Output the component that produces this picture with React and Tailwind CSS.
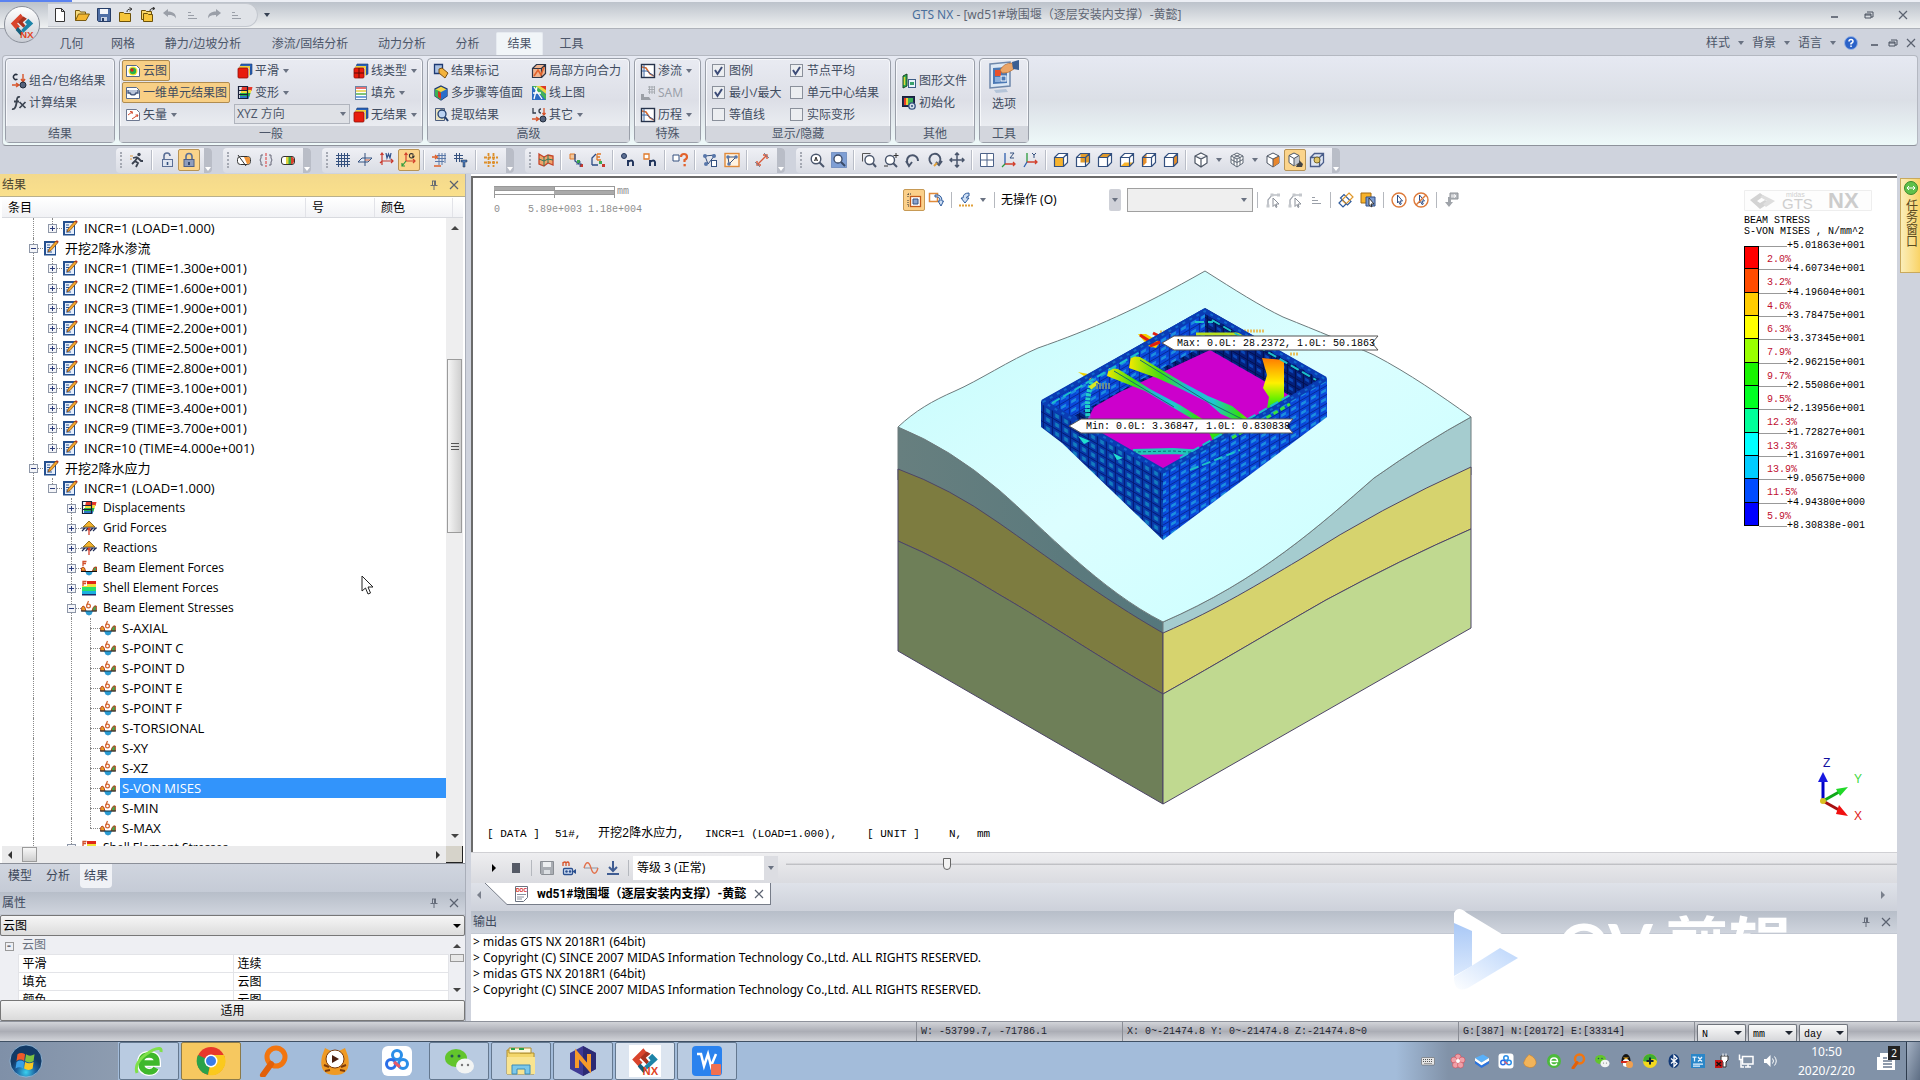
import React from "react";

const UI = "font-['Noto_Sans','Noto_Sans_CJK_SC',sans-serif]";
const MONO = "font-['Liberation_Mono','Noto_Sans_CJK_SC',monospace]";

/* ---------- icons ---------- */
const cubeEdges = "M1.500 5.500h9v9h-9zM1.500 5.500l4-4h9v9l-4 4M10.500 5.500l4-4";
const box = (face, d) => (
  <>
    <path d="M1.500 5.500l4-4h9v9l-4 4h-9z" fill="#fff" />
    <path d={d} fill={face} />
    <path d={cubeEdges} fill="none" stroke="#33507f" strokeWidth="1.200" />
  </>
);
const redCube = (
  <>
    <path d="M4 1h11v10l-2 1V4H3z" fill="#2a62b8" stroke="#173a72" strokeWidth=".6" />
    <path d="M3 3h10v9l-1 1V5H2z" fill="#f0d040" />
    <rect x="1" y="5" width="10" height="10" rx="1" fill="#e81c0c" stroke="#901008" strokeWidth=".8" />
  </>
);
const hex = "M8 1l6 3v7l-6 4-6-4V4z";

const ICONS = {
  new: <path d="M3.500 1.500h6l3 3v10h-9zM9.500 1.500v3h3" fill="#fff" stroke="#333" />,
  open: <><path d="M1.500 13.500v-10h4l1 1.500h5v2" fill="#f7dc80" stroke="#7a5b10" /><path d="M1.500 13.500l3-6.500h11l-3.500 6.500z" fill="#f4b731" stroke="#7a5b10" /></>,
  save: <><path d="M1.500 1.500h13v13h-12l-1-1z" fill="#4f6fa5" stroke="#263d66" /><path d="M4 2h8v5H4z" fill="#f4f6fa" /><path d="M5 10h6v4H5z" fill="#c9d2e3" /><path d="M6 11h2v3H6z" fill="#263d66" /></>,
  saveG: <><path d="M1.500 1.500h13v13h-12l-1-1z" fill="#a9adb3" stroke="#8a8e94" /><path d="M4 2h8v5H4z" fill="#eceef0" /><path d="M5 10h6v4H5z" fill="#dcdfe3" /></>,
  folderUp: <><path d="M1.500 5.500h4l1 1h6v8h-11z" fill="#f6c63c" stroke="#6e5208" /><path d="M9 5c0-2 1-3 4-3M11.500 .5L14 2l-2.500 2" fill="none" stroke="#333" /></>,
  folders: <><path d="M1.500 3.500h4l1 1h5v8h-10z" fill="#f9d869" stroke="#6e5208" /><path d="M3.500 6.500h4l1 1h4v7h-9z" fill="#f6c63c" stroke="#6e5208" /><path d="M10 4c0-2 1-2.500 4-2.500M12.500 0L15 1.500 12.500 3" fill="none" stroke="#333" /></>,
  undo: <path d="M1 6l5-4v2.500c5 0 8 2 8 7-1.500-3-4-3.500-8-3.500V10z" fill="#9a9fa8" />,
  redo: <path d="M15 6l-5-4v2.500c-5 0-8 2-8 7 1.500-3 4-3.500 8-3.500V10z" fill="#9a9fa8" />,
  list: <path d="M4 5.500h3M4 8.500h6M4 11.500h9" stroke="#9a9fa8" />,
  combine: <><path d="M6.500 2A2.500 2.500 0 1 0 6.500 6" fill="none" stroke="#27303f" strokeWidth="1.500" /><path d="M12 1v7M10 6l2 3 2-3" stroke="#d8542a" strokeWidth="1.400" fill="none" /><path d="M1 12h6M5 10l3 2-3 2" stroke="#d8542a" strokeWidth="1.400" fill="none" /><circle cx="12" cy="12" r="3" fill="#55637c" stroke="#222c3c" /></>,
  fx: <><path d="M9 2C5.500 1 6 5 5.500 8S4 15 1 14M3 6.500h5" fill="none" stroke="#3b4350" strokeWidth="1.800" /><path d="M8.500 7l6 6M14.500 7l-6 6" stroke="#3b4350" strokeWidth="1.700" /></>,
  contour: <><path d="M1.500 2.500h10l3 3v8h-13z" fill="#fff" stroke="#56698c" /><circle cx="8" cy="8" r="4.500" fill="#f3e330" /><circle cx="8" cy="8" r="3.200" fill="#27b24a" /><circle cx="7" cy="7" r="1.700" fill="#d8221c" /></>,
  oned: <><path d="M1.500 2.500h10l3 3v8h-13z" fill="#fff" stroke="#56698c" /><path d="M3 5v3h2c.5 2.500 5.500 2.500 6 0h2V5" fill="#b8c4da" stroke="#45587c" strokeWidth="1.300" /></>,
  vector: <><path d="M1.500 2.500h10l3 3v8h-13z" fill="#fff" stroke="#6d7890" /><path d="M3 8l4-3M5 4.500l2.500.3L7 7M7 12l6-4M10.500 8l2.500 0-1 2" fill="none" stroke="#d44a2c" /></>,
  redCube,
  lineType: <>{redCube}<path d="M6 5v10M1 10h10" stroke="#5a0b06" /></>,
  deform: <><path d="M5 2h10.500l-1 4H4z" fill="#e5382a" /><path d="M4 5h10.500l-1 3.500H4z" fill="#f2dc3a" /><path d="M3 8h10.500l-1 3.500H3z" fill="#22b24c" /><path d="M3 11h9.500l-1 3H3z" fill="#2a7ac8" /><path d="M1.500 1.500h9v12h-9zM1 5.500h10M1 9.500h10" fill="none" stroke="#18203a" strokeWidth="1.200" /></>,
  fill: <><rect x="2.500" y="1.500" width="11" height="13" fill="#fff" stroke="#6b87a8" /><path d="M3 3h10" stroke="#e04040" strokeWidth="1.500" /><path d="M3 6h10" stroke="#e8cc40" strokeWidth="1.500" /><path d="M3 9h10" stroke="#56b04a" strokeWidth="1.500" /><path d="M3 12h10" stroke="#4a88d4" strokeWidth="1.500" /></>,
  tag: <><path d="M1.500 1.500h8v9h-8z" fill="#a9c1e2" stroke="#1d3a73" strokeWidth="1.300" /><path d="M6 6l3-1 6 5-3 5-6-5z" fill="#f3b33c" stroke="#7c4f10" /></>,
  iso: <><path d={hex} fill="#f1d544" stroke="#1d3a73" strokeWidth="1.300" /><path d="M8 7l6-3v7l-6 4z" fill="#2a6ec9" /><path d="M2 4l6 3v8l-6-4z" fill="#3cb054" /><path d="M5 6l3 2v6l-3-2z" fill="#d3321f" /></>,
  extract: <><path d="M2.500 1.500h9v12h-9z" fill="#e9e2c0" stroke="#4c5d7e" /><circle cx="9" cy="7" r="4" fill="#bcd3f2" stroke="#24406e" strokeWidth="1.300" /><path d="M12 10l3 4" stroke="#24406e" strokeWidth="2" /></>,
  local: <><path d={cubeEdges} fill="#f0b490" stroke="#2b3447" strokeWidth="1.200" /><path d="M3 13l4-6 3 5 3-8" fill="none" stroke="#e2622c" strokeWidth="1.600" /></>,
  online: <><path d="M1 1h14v14H1z" fill="#2c6cc2" /><path d="M1 1h5l9 9v5z" fill="#43b356" /><path d="M5 1h10v8z" fill="#e9d83f" /><path d="M9 1h6v4z" fill="#dd3a27" /><path d="M3 2l8 12M6 2l-3 12M2 8h8" stroke="#fff" strokeWidth="1.300" /></>,
  lc: <><path d="M2 1v5h3M10 2a2 2 0 1 0 0 4" fill="none" stroke="#333b49" strokeWidth="1.300" /><path d="M13 1v7M11.500 6l1.500 2 1.500-2M1 12h6M5 10l3 2-3 2" stroke="#d8542a" strokeWidth="1.300" fill="none" /><circle cx="12" cy="12" r="3" fill="#55637c" stroke="#222c3c" /></>,
  seep: <><rect x="1.500" y="1.500" width="13" height="13" fill="#fff" stroke="#26324a" strokeWidth="1.400" /><path d="M2 4l4 1 4 6 4 2" fill="none" stroke="#d86a2c" strokeWidth="1.500" /><path d="M2 8l5 0 7 5M4 2v12" fill="none" stroke="#3a64a0" /></>,
  sam: <><path d="M1 9h3v3h5l2 3H1z" fill="#9b9fa6" /><path d="M8 2h7M8 4.500h7M8 7h7M9.500 1v8M12 1v8M14.500 1v8" stroke="#a4a8ae" strokeWidth=".9" /></>,
  gfile: <><path d="M2 3l4-2v12l-4 2z" fill="#2fae4e" stroke="#174424" /><path d="M3.500 4v8" stroke="#e3d53a" strokeWidth="1.500" /><rect x="7.500" y="6.500" width="7" height="8" fill="#e9f3fb" stroke="#3c5d86" /><path d="M9 9h4v3H9z" fill="#39a06d" /></>,
  init: <><rect x="1.500" y="1.500" width="12" height="10" fill="#1e2c54" stroke="#18203c" /><path d="M3 3h4v7H3z" fill="#e63b28" /><path d="M5 3h4v7H5z" fill="#ecd23a" /><path d="M7 3h5v7H7z" fill="#3db158" /><circle cx="11" cy="11" r="3.200" fill="#d5dfec" stroke="#33507f" strokeWidth="1.300" /><circle cx="11" cy="11" r="1" fill="#33507f" /></>,
  run: <><circle cx="10" cy="2.500" r="1.700" fill="#3b4250" /><path d="M9 5l-3 4 3 2-2 4M6 9l-3 3M8 5l-4 1M9 6l3 3h2" fill="none" stroke="#3b4250" strokeWidth="1.800" /><path d="M1 4h3M1 7h2" stroke="#e09a3a" /></>,
  unlock: <><path d="M5 8V4a3 3 0 0 1 6 0" fill="none" stroke="#5b6f96" strokeWidth="1.600" /><rect x="3.500" y="7.500" width="10" height="7" fill="#dfe5f0" stroke="#5b6f96" /><path d="M8.500 10v3" stroke="#33507f" strokeWidth="1.600" /></>,
  lock: <><path d="M5 8V4.500a3 3 0 0 1 6 0V8" fill="none" stroke="#5b6f96" strokeWidth="1.600" /><rect x="3" y="7.500" width="10" height="7" fill="#8f9dbd" stroke="#4e5f86" /><path d="M8 10v3" stroke="#24365c" strokeWidth="1.600" /></>,
  pipe1: <><rect x="1.500" y="4.500" width="13" height="8" rx="3" fill="#fff" stroke="#333" /><path d="M8 5h4a2 2 0 0 1 2 2v3a2 2 0 0 1-2 2h-1z" fill="#f0953a" /><path d="M2 3l8 11" stroke="#333" /></>,
  pipe2: <><path d="M5 3H3v3l-1 2 1 2v3h2M11 3h2v3l1 2-1 2v3h-2" fill="#dfe4ec" stroke="#667" /><path d="M8 1v14" stroke="#d33" strokeDasharray="3 1" /></>,
  pipe3: <><rect x="1.500" y="4.500" width="13" height="8" rx="2.500" fill="#fff" stroke="#333" /><path d="M6 5h3v7H6z" fill="#e2d23a" /><path d="M8.500 5h3v7h-3z" fill="#3ba84c" /><path d="M11 5h1.500l1.500 2v3l-1.500 2H11z" fill="#d6402c" /></>,
  grid: <path d="M3.500 1v14M6.500 1v14M9.500 1v14M12.500 1v14M1 3.500h14M1 6.500h14M1 9.500h14M1 12.500h14" stroke="#34507e" />,
  plane: <><path d="M1 10l4-4h10l-4 4z" fill="#e3ecf8" stroke="#34507e" /><path d="M8 1v13" stroke="#34507e" /><path d="M8 8h5" stroke="#d85a2a" /></>,
  axW: <><path d="M3 1v12M1 11l2-2h11M12 7l2 2-2 2M1.500 3L3 1l1.500 2" stroke="#c8382c" strokeWidth="1.200" fill="none" /><path d="M7 1l1 5 1.500-4L11 6l1-5" fill="none" stroke="#2e4f8a" strokeWidth="1.200" /></>,
  axG: <><path d="M5 1v8h9M3.500 3L5 1l1.500 2M12 7l2 2-2 2" stroke="#d2402c" strokeWidth="1.200" fill="none" /><path d="M5 9l-4 5M1 11v3h3" stroke="#2b9a3c" strokeWidth="1.200" fill="none" /><path d="M12.500 2.500C10 .5 8 2 8.500 4.500S13 6 13 4.200h-2" fill="none" stroke="#333" strokeWidth="1.200" /></>,
  gridArrow: <><path d="M6 3.500h9M6 6.500h9M4 9.500h9M8 1v12M11 1v12M14 1v10" stroke="#5b78a8" /><path d="M1 5h5M4 3l2.500 2L4 7M3 14h7" stroke="#e0602a" strokeWidth="1.300" fill="none" /></>,
  gridHammer: <><path d="M1 3.500h9M1 6.500h9M3.500 1v9M6.500 1v9" stroke="#34507e" /><path d="M8 8h6v2h-2v5h-2v-5H8z" fill="#4978b8" stroke="#234" strokeWidth=".5" /></>,
  orangeGrid: <path d="M5.500 1v14M10.500 1v14M1 5.500h14M1 10.500h14" stroke="#dd8f2a" strokeWidth="1.800" strokeDasharray="3 1" />,
  map: <><path d="M1 2l5 3 4-2 5 1v9l-5-2-4 3-5-2z" fill="#f0a46a" stroke="#c4452a" strokeWidth="1.300" /><path d="M6 5v9M10 3v8M1 7l5 2 4-2 5 1" stroke="#317a5a" fill="none" /></>,
  n1: <><path d="M2 2h5v5H2z" fill="#f3c69a" stroke="#e07a2a" /><path d="M7 2v7l4 3" stroke="#2d4d86" strokeWidth="1.300" fill="none" /><path d="M9 8h3v3H9z" fill="#3caa52" /><path d="M12 12h3v3h-3z" fill="#c8382c" /><path d="M12 9v6M8 12h6" stroke="#2d4d86" strokeWidth=".8" /></>,
  n2: <><path d="M2 13V6l4-4M2 13h6" stroke="#2d4d86" strokeWidth="1.300" fill="none" /><path d="M7 2h4M7 5h3M7 8h4M7 2v6" stroke="#e07a2a" strokeWidth="1.300" /><path d="M9 9h3v3H9z" fill="#3caa52" /><path d="M12 12h3v3h-3z" fill="#c8382c" /></>,
  nn: <><circle cx="4" cy="4" r="2.500" fill="#5c6f93" stroke="#26385c" /><path d="M8 14V8M8 10q4-3 5 0v4" fill="none" stroke="#1c3058" strokeWidth="1.900" /></>,
  nn2: <><path d="M2 2h5v5H2z" fill="#fff" stroke="#e07a2a" strokeWidth="1.300" /><path d="M8 14V8M8 10q4-3 5 0v4" fill="none" stroke="#1c3058" strokeWidth="1.900" /></>,
  qm: <><path d="M1 3h6v6H1z" fill="#fff" stroke="#34507e" /><path d="M9 5q0-3 3-3t3 3q0 2-2.500 3v2" fill="none" stroke="#e2622c" strokeWidth="2.200" /><rect x="11.500" y="12" width="2.300" height="2.300" fill="#e2622c" /></>,
  mol: <><path d="M3 4l10-1M3 4l3 8M13 3l-7 9" stroke="#34507e" fill="none" /><circle cx="3" cy="4" r="2" fill="#5877aa" /><circle cx="12" cy="4" r="2" fill="#5877aa" /><circle cx="4" cy="12" r="2" fill="#5877aa" /><rect x="9.500" y="8.500" width="5" height="6" fill="#fff" stroke="#34507e" /></>,
  mol2: <><rect x="1" y="1.500" width="14" height="13" fill="#fff3e2" stroke="#e08a3a" strokeWidth="1.400" /><path d="M4 5h8l-7 7z" stroke="#34507e" fill="none" /><circle cx="4" cy="5" r="1.800" fill="#5877aa" /><circle cx="12" cy="5" r="1.800" fill="#5877aa" /><circle cx="5" cy="12" r="1.800" fill="#5877aa" /></>,
  measure: <><path d="M3 13L13 3M9 3h4v4M7 13H3V9" stroke="#d85a3a" strokeWidth="1.400" fill="none" /><path d="M1 10l5 5M10 1l5 5" stroke="#7a8499" /></>,
  zoomA: <><circle cx="7" cy="7" r="4.800" fill="#fff" stroke="#4a566c" strokeWidth="1.400" /><path d="M10.500 10.500L15 15" stroke="#4a566c" strokeWidth="2" /><path d="M5.500 9L7 5l1.500 4M6 8h2" stroke="#333" fill="none" /></>,
  zoomSel: <><rect x=".5" y=".5" width="15" height="15" fill="#7f9fd4" stroke="#4066a8" strokeDasharray="1 1" /><circle cx="7" cy="7" r="4" fill="#fff" stroke="#3a4a68" strokeWidth="1.300" /><path d="M10 10l4 4" stroke="#3a4a68" strokeWidth="2" /></>,
  zoomR: <><path d="M1.500 1.500h8M1.500 1.500v8" stroke="#555" /><circle cx="8.500" cy="8" r="4.500" fill="#fff" stroke="#4a566c" strokeWidth="1.400" /><path d="M12 11.500l3 3.500" stroke="#4a566c" strokeWidth="2" /></>,
  zoomP: <><circle cx="7" cy="8" r="4.500" fill="#fff" stroke="#4a566c" strokeWidth="1.400" /><path d="M10 11l4 4" stroke="#4a566c" strokeWidth="2" /><path d="M13 1v5M10.500 3.500h5M1 14h4" stroke="#333" /></>,
  rotL: <path d="M4 13A5.500 5.500 0 1 1 13 9M1 9l3 5 3-4" fill="none" stroke="#4a566c" strokeWidth="1.900" />,
  rotR: <><path d="M5 12A5.500 5.500 0 1 1 12 11M15 9l-3 4-3-3" fill="none" stroke="#4a566c" strokeWidth="1.900" /><path d="M7 14l3-3" stroke="#e0a03a" strokeWidth="2" /></>,
  pan: <path d="M8 1v14M1 8h14M6 3l2-2 2 2M6 13l2 2 2-2M3 6L1 8l2 2M13 6l2 2-2 2" fill="none" stroke="#4a566c" strokeWidth="1.500" />,
  win4: <path d="M1.500 1.500h13v13h-13zM8 1.500v13M1.500 8h13" fill="#fff" stroke="#4c6288" />,
  axZ: <><path d="M4 1v11" stroke="#2f5fae" strokeWidth="1.300" /><path d="M4 12h10M12 10l2 2-2 2" stroke="#d2402c" strokeWidth="1.300" fill="none" /><path d="M4 12l-3 3" stroke="#2b9a3c" strokeWidth="1.300" /><path d="M9 1h4L9 6h4" fill="none" stroke="#34507e" /></>,
  axY: <><path d="M4 1v9" stroke="#2b9a3c" strokeWidth="1.300" /><path d="M4 10h10M12 8l2 2-2 2" stroke="#d2402c" strokeWidth="1.300" fill="none" /><path d="M4 10l-3 5" stroke="#2f5fae" strokeWidth="1.300" /><path d="M9 1l2 2 2-2M11 3v3" fill="none" stroke="#34507e" /></>,
  bFront: box("#f7b32c", "M1.500 5.500h9v9h-9z"),
  bBack: box("#e09a2a", "M5.500 1.500h9v9h-9z"),
  bTop: box("#e09a2a", "M1.500 5.500l4-4h9l-4 4z"),
  bBottom: box("#f7b32c", "M1.500 14.500l4-4h9l-4 4z"),
  bLeft: box("#e88f2a", "M1.500 5.500l4-4v9l-4 4z"),
  bRight: box("#e88f2a", "M10.500 5.500l4-4v9l-4 4z"),
  cube: <path d={hex + "M2 4l6 3 6-3M8 7v8"} fill="#fff" stroke="#4c5563" strokeWidth="1.200" />,
  cubeG: <path d={hex + "M2 4l6 3 6-3M8 7v8M5 2.500l6 3v7.500M11 2.500l-6 3V13M2 7.500l6 3 6-3"} fill="#fff" stroke="#5f6875" />,
  cubeO: <><path d={hex} fill="#fff" stroke="#4c5563" /><path d="M8 7l6-3v7l-6 4z" fill="#e8862c" /><path d="M2 4l6 3 6-3M8 7v8" fill="none" stroke="#4c5563" /></>,
  cubeS: <><path d="M9 15h6l1-3-4-4z" fill="#444" /><path d="M7 1l5 2.500v7L7 14l-5-3.500v-7z" fill="#fff" stroke="#4c5563" /><path d="M7 6.500l5-3v7L7 14z" fill="#c3c8d0" /><path d="M2 3.500l5 3 5-3M7 6.500V14" fill="none" stroke="#4c5563" /></>,
  cubeI: <><path d={cubeEdges} fill="#dfe6f2" stroke="#4a5d8a" strokeWidth="1.300" /><circle cx="8" cy="8" r="3" fill="#e2c66a" stroke="#7c6a2a" /></>,
  doc: <><rect x="1" y="1" width="12" height="14.500" fill="#24508f" /><path d="M3 3h9v11H3z" fill="#e6eefa" /><path d="M4 5h3M4 7.500h3M4 10h4M4 12h5" stroke="#2f5a9c" /><path d="M5 12l1-3 7-8 2 1.500-7 8z" fill="#f5a62a" stroke="#7a4310" strokeWidth=".7" /><path d="M12.500 1.500l2 1.500 1.200-1.600L14 .2z" fill="#b3361e" /></>,
  reaction: <><path d="M8 1l6 6H2z" fill="#f2b32c" stroke="#7a5810" strokeWidth=".8" /><path d="M0 8h16M1 11l3-3M4.500 11l3-3M9 11l3-3M12 11l3-3" stroke="#1e2a55" strokeWidth="1.200" /><path d="M8 15V8M6.500 10L8 8l1.500 2" fill="none" stroke="#d2402c" strokeWidth="1.300" /></>,
  beamF: <><path d="M.5 11V8q1.500-2 3 0l1 3z" fill="#eaa02c" stroke="#b8401c" /><path d="M15.500 11V7q-3-1-4 4z" fill="#4aa24e" stroke="#b8401c" /><path d="M4 11h8l-1.500 3.500L8 15.500l-2.500-1z" fill="#2a9ad0" /><path d="M0 11.500h16" stroke="#111" /><path d="M2 6V1.500h3.500M2 3.500h3" fill="none" stroke="#d2502c" strokeWidth="1.300" /></>,
  beamS: <><path d="M.7 11V7.500q1.300-2.500 3-.5L5 11z" fill="#eaa02c" stroke="#b8401c" /><path d="M15.300 11V6q-3-1-4.300 5z" fill="#4aa24e" stroke="#b8401c" /><path d="M4 11h8l-1.500 3.500L8 15.500l-2.500-1z" fill="#2a9ad0" /><path d="M0 11h16" stroke="#14303a" /><circle cx="7.500" cy="6" r="1.900" fill="#fff" stroke="#d2602c" strokeWidth="1.200" /><path d="M5.800 5L7.500 1" stroke="#d2602c" strokeWidth="1.200" /></>,
  shellF: <><path d="M1 1h14v4H1z" fill="#e02818" /><path d="M1 4h14v3H1z" fill="#f2e23a" /><path d="M1 7h14v4H1z" fill="#2ae06a" /><path d="M1 11h14v4H1z" fill="#1ab0e0" /><path d="M1 14h14v1.500H1z" fill="#1a2a6a" /><path d="M0 0h6v6H0z" fill="#fff" /><path d="M2 6V1.500h3.500M2 3.500h3" fill="none" stroke="#d2502c" strokeWidth="1.300" /></>,
  camera: <><path d="M2 6V2M2 3q2-2 3 0v3M5 3q2-2 3 0v3" fill="none" stroke="#d8542a" strokeWidth="1.300" /><rect x="2.500" y="8.500" width="9" height="6" rx="1" fill="#d3e2f7" stroke="#2a4f8e" strokeWidth="1.300" /><path d="M12 11l3-2v5l-3-2z" fill="#2a4f8e" /><circle cx="5.500" cy="11.500" r="1.300" fill="#2a4f8e" /><circle cx="9" cy="11.500" r="1.300" fill="#2a4f8e" /></>,
  wave: <><path d="M1 8h14" stroke="#8b93a2" /><path d="M1 8c2-7 5-7 7 0s5 7 7 0" fill="none" stroke="#e2704a" strokeWidth="1.300" /></>,
  down: <path d="M8 1v9M4 7l4 4 4-4M2 14h12" fill="none" stroke="#3f5c92" strokeWidth="2" />,
  selBox: <><path d="M2 2h3M2 2v3M2 8v6h4" stroke="#333" strokeDasharray="1 1" /><rect x="4.500" y="4.500" width="10" height="10" fill="#fff" stroke="#c25a1a" strokeWidth="1.300" /><path d="M7 7h5v5H7z" fill="#8aa4d0" stroke="#34507e" /></>,
  selNext: <><rect x="1.500" y="1.500" width="8" height="8" fill="#fff" stroke="#e08a3a" strokeWidth="1.500" /><path d="M7 5q5-1 5 4h-2l3 5 2.500-5h-1.500q0-7-7-6z" fill="#cfe0f5" stroke="#2d5a9c" /></>,
  snap: <><path d="M11 1q-6 0-6 5H3l4 5 4-5H8.500q0-2 2.500-2z" fill="#cfe0f5" stroke="#2d5a9c" /><path d="M1 13.500h14" stroke="#e0a03a" strokeWidth="2" strokeDasharray="2 1" /></>,
  pick: <><path d="M3 14V8l4-5h7" fill="none" stroke="#9a9fa8" strokeWidth="1.200" /><path d="M1.500 12.500h3v3h-3zM5.500 1.500h3v3h-3zM12 1.500h3v3h-3z" fill="#c4c7cc" /><path d="M8 6l6 6h-3l1 3-1 .5-1-3-2 2z" fill="#fff" stroke="#8a8f98" /></>,
  diamonds: <><path d="M1 4.500l3.500-3.500 7 7-3.500 3.500z" transform="translate(1.500 1.500)" fill="#fff" stroke="#2d5a9c" strokeWidth="1.200" /><path d="M11 1l4 4-7 7-4-4z" fill="none" stroke="#e0982a" strokeWidth="1.200" /><path d="M4.500 7.500L1 11l4 4 3.500-3.500" fill="none" stroke="#2d5a9c" strokeWidth="1.200" /></>,
  boxPick: <><path d="M1 1h10v10H1z" fill="#f7b32c" stroke="#a46a10" /><path d="M6 5h9v9H6z" fill="#7d9cd0" stroke="#2d4d86" /><path d="M9 6l5 6h-3l1 3-3-2z" fill="#fff" stroke="#333" /></>,
  pickC: <><circle cx="8" cy="8" r="7" fill="#fff" stroke="#dd7a3a" strokeWidth="1.400" /><path d="M6.500 3l5 6H9l1.300 3-1.300.5L7.700 9.500 6.500 11z" fill="#fff" stroke="#2d4d86" /></>,
  pickX: <><circle cx="8" cy="8" r="7" fill="#fff" stroke="#dd7a3a" strokeWidth="1.400" /><path d="M6.500 3l5 6H9l1.300 3-1.300.5L7.700 9.500 6.500 11z" fill="#fff" stroke="#2d4d86" /><path d="M3 13L13 3" stroke="#dd7a3a" strokeWidth="1.400" /></>,
  idArrow: <><path d="M7 1h8v6H7z" fill="#b4b7bc" stroke="#8f9398" /><path d="M9 2.500v3M11 2.500v3l2-1.500z" stroke="#fff" fill="none" /><path d="M5 5h3v5h2l-4 5-4-5h3z" fill="#9fa3a9" /></>,
};

const Icon = ({ n, className = "h-4 w-4" }) => (
  <svg viewBox="0 0 16 16" className={"shrink-0 " + className} fill="none" aria-hidden="true">{ICONS[n]}</svg>
);
const Caret = ({ className = "text-gray-500" }) => (
  <svg viewBox="0 0 6 4" className={"h-1 w-1.5 shrink-0 " + className} aria-hidden="true"><path d="M0 0h6L3 4z" fill="currentColor" /></svg>
);
const Pin = () => <svg viewBox="0 0 10 10" className="h-2.5 w-2.5" aria-hidden="true"><path d="M3 1h4M3.500 1v4M6.500 1v4M5.500 1v4M1.500 5.500h7M5 6v4" fill="none" stroke="#5b6270" strokeWidth=".9" /></svg>;
const Cross = () => <svg viewBox="0 0 10 10" className="h-2.5 w-2.5" aria-hidden="true"><path d="M1 1l8 8M9 1L1 9" stroke="#5b6270" strokeWidth="1.200" /></svg>;
const Min = () => <svg viewBox="0 0 10 10" className="h-2.5 w-2.5" aria-hidden="true"><path d="M1 7h7" stroke="#4b5260" strokeWidth="1.500" /></svg>;
const Restore = () => <svg viewBox="0 0 10 10" className="h-2.5 w-2.5" aria-hidden="true"><path d="M3 2h6v5H7M1 4h6v4H1zM1 5h6" fill="none" stroke="#4b5260" /></svg>;

const NxMark = ({ className }) => (
  <svg viewBox="0 0 40 40" className={className} aria-hidden="true">
    <path d="M18 4L4 18l8 9 5-5-4-4 9-9z" fill="#d9442c" />
    <path d="M22 8l-8 8 8 8 3-3-4-5 6-5z" fill="#a8321f" />
    <path d="M36 18l-7-7-5 5 3 3-8 8 3 4z" fill="#1d84a8" />
    <path d="M22 31l-8-8-3 4 7 8z" fill="#16607e" />
    <text x="17" y="38" fontSize="14" fontWeight="700" fill="#e2451f" fontFamily="Liberation Sans">NX</text>
  </svg>
);

/* ---------- ribbon ---------- */
const Group = ({ title, w, children }) => (
  <section className={"flex flex-col rounded-sm border border-[#9a9fa9] bg-linear-to-b from-[#e9ebf2] via-[#dddfe7] to-[#f2f5f7] shadow-[inset_0_0_0_1px_#f7f8fb] " + w}>
    <div className="flex flex-1 px-0.5 pt-px">{children}</div>
    <h2 className="h-4 bg-[#d3d6dd] text-center text-xs leading-4 text-[#4c5669]">{title}</h2>
  </section>
);
const RBtn = ({ icon, children, drop, on, dim }) => (
  <button className={"flex h-[21px] items-center gap-0.5 self-start rounded-xs border px-0.5 text-xs whitespace-nowrap " + (on ? "border-[#b08c50] bg-[#f8cf85] " : "border-transparent ") + (dim ? "text-[#9ba0a9]" : "text-[#414c60]")}>
    <Icon n={icon} />
    <span>{children}</span>
    {drop && <span className="pl-0.5"><Caret /></span>}
  </button>
);
const Col = ({ w = "", children, mid }) => <div className={"flex flex-col gap-px " + (mid ? "pt-2.5 " : "") + w}>{children}</div>;
const Check = ({ label, on }) => (
  <label className="flex h-[21px] items-center gap-1 text-xs whitespace-nowrap text-[#414c60]">
    <span className="grid">
      <input type="checkbox" defaultChecked={on} className="peer col-start-1 row-start-1 h-[13px] w-[13px] appearance-none border border-[#8a909b] bg-[#eceef1]" />
      <svg viewBox="0 0 13 13" className="pointer-events-none invisible col-start-1 row-start-1 h-[13px] w-[13px] peer-checked:visible" aria-hidden="true"><path d="M3 6l2.500 4L10 3" fill="none" stroke="#3d4c78" strokeWidth="2" /></svg>
    </span>
    {label}
  </label>
);

function Ribbon() {
  return (
    <div className="mx-0.5 flex h-[91px] gap-1 rounded border border-[#b4b8c1] border-b-[#8e929b] bg-linear-to-b from-[#e6e9f2] via-[#dbdfe6] to-[#eef9f9] px-0.5 pt-0.5 pb-0.5">
      <Group title="结果" w="w-[110px]"><Col mid><RBtn icon="combine">组合/包络结果</RBtn><RBtn icon="fx">计算结果</RBtn></Col></Group>
      <Group title="一般" w="w-[304px]">
        <Col w="w-[112px]"><RBtn icon="contour" on>云图</RBtn><RBtn icon="oned" on>一维单元结果图</RBtn><RBtn icon="vector" drop>矢量</RBtn></Col>
        <Col w="w-[116px]">
          <RBtn icon="redCube" drop>平滑</RBtn><RBtn icon="deform" drop>变形</RBtn>
          <label className="grid items-center text-[#4c5669]">
            <select aria-label="方向" className="col-start-1 row-start-1 h-5 w-full appearance-none border border-[#b0b4bd] bg-[#dfe1e6] pl-0.5 text-xs"><option>XYZ 方向</option></select>
            <span className="pointer-events-none col-start-1 row-start-1 justify-self-end pr-1"><Caret /></span>
          </label>
        </Col>
        <Col><RBtn icon="lineType" drop>线类型</RBtn><RBtn icon="fill" drop>填充</RBtn><RBtn icon="redCube" drop>无结果</RBtn></Col>
      </Group>
      <Group title="高级" w="w-[203px]">
        <Col w="w-[98px]"><RBtn icon="tag">结果标记</RBtn><RBtn icon="iso">多步骤等值面</RBtn><RBtn icon="extract">提取结果</RBtn></Col>
        <Col><RBtn icon="local">局部方向合力</RBtn><RBtn icon="online">线上图</RBtn><RBtn icon="lc" drop>其它</RBtn></Col>
      </Group>
      <Group title="特殊" w="w-[67px]"><Col><RBtn icon="seep" drop>渗流</RBtn><RBtn icon="sam" dim>SAM</RBtn><RBtn icon="seep" drop>历程</RBtn></Col></Group>
      <Group title="显示/隐藏" w="w-[186px]">
        <Col w="w-[82px] pl-1"><Check label="图例" on /><Check label="最小/最大" on /><Check label="等值线" /></Col>
        <Col><Check label="节点平均" on /><Check label="单元中心结果" /><Check label="实际变形" /></Col>
      </Group>
      <Group title="其他" w="w-[80px]"><Col mid><RBtn icon="gfile">图形文件</RBtn><RBtn icon="init">初始化</RBtn></Col></Group>
      <Group title="工具" w="w-[50px]">
        <button className="flex flex-1 flex-col items-center gap-0.5 text-xs text-[#414c60]">
          <svg viewBox="0 0 32 34" className="h-[34px] w-8" aria-hidden="true">
            <path d="M2 4l20-2v24l-20 2z" fill="#dce8f5" stroke="#6d87ab" strokeWidth="1.500" /><path d="M5 8l14-1v16l-14 1z" fill="#4b79b5" />
            <rect x="7" y="10" width="6" height="6" fill="#e8502a" /><rect x="13" y="16" width="5" height="5" fill="#4b79b5" stroke="#fff" /><rect x="7" y="17" width="5" height="5" fill="#8db0dc" />
            <path d="M6 30l12-1 2 3-12 1z" fill="#b4c4d8" /><path d="M12 10q4-7 12-7l2 6q-6 5-12 4z" fill="#eba567" stroke="#a9622c" strokeWidth=".6" /><path d="M24 2l7-2v10l-6-1z" fill="#3b5e92" />
          </svg>
          选项
        </button>
      </Group>
    </div>
  );
}

/* ---------- icon toolbar ---------- */
const STRIPS = [
  ["run", "|", "unlock", "*lock"],
  ["pipe1", "pipe2", "pipe3"],
  ["grid", "plane", "axW", "*axG", "|", "gridArrow", "gridHammer", "|", "orangeGrid"],
  ["map", "|", "n1", "n2", "|", "nn", "nn2", "|", "qm", "|", "mol", "mol2", "|", "measure"],
  ["zoomA", "zoomSel", "|", "zoomR", "zoomP", "rotL", "rotR", "pan", "|", "win4", "axZ", "axY", "|", "bFront", "bBack", "bTop", "bBottom", "bLeft", "bRight", "|", "cube", "v", "cubeG", "v", "cubeO", "*cubeS", "cubeI"],
];
const Toolbar = () => (
  <div className="flex h-[28px] items-center gap-[11px] pl-[116px]">
    {STRIPS.map((s, i) => (
      <div key={i} className="flex h-[25px] items-center rounded bg-linear-to-b from-[#eff0f5] to-[#d9dce4]">
        <span className="mx-1 h-4 w-0.5 border-l-2 border-dotted border-[#a5a9b3]" />
        {s.map((n, j) =>
          n === "|" ? <span key={j} className="mx-[3px] h-5 w-0.5 border-l border-[#b9bdc7] bg-white" />
          : n === "v" ? <span key={j} className="flex w-3.5 justify-center"><Caret /></span>
          : <button key={j} aria-label={n.replace("*", "")} className={"flex h-[22px] w-[22px] items-center justify-center " + (n[0] === "*" ? "rounded-xs border border-[#b79355] bg-[#fbd48b]" : "")}><Icon n={n.replace("*", "")} /></button>
        )}
        <span className="flex h-full w-3 justify-end"><span className="flex h-full w-2 items-end justify-center rounded-r bg-[#b9bdc7] pb-0.5"><Caret className="text-white" /></span></span>
      </div>
    ))}
  </div>
);

/* ---------- results tree ---------- */
const times = ["1.300", "1.600", "1.900", "2.200", "2.500", "2.800", "3.100", "3.400", "3.700", "4.000"];
const ROWS = [
  { d: 1, b: "+", i: "doc", t: "INCR=1 (LOAD=1.000)", last: true },
  { d: 0, b: "-", i: "doc", t: "开挖2降水渗流" },
  ...times.map((v, k) => ({ d: 1, b: "+", i: "doc", t: `INCR=${k + 1} (TIME=${v}e+001)`, last: k === 9 })),
  { d: 0, b: "-", i: "doc", t: "开挖2降水应力" },
  { d: 1, b: "-", i: "doc", t: "INCR=1 (LOAD=1.000)", last: true },
  { d: 2, b: "+", i: "deform", t: "Displacements" },
  { d: 2, b: "+", i: "reaction", t: "Grid Forces" },
  { d: 2, b: "+", i: "reaction", t: "Reactions" },
  { d: 2, b: "+", i: "beamF", t: "Beam Element Forces" },
  { d: 2, b: "+", i: "shellF", t: "Shell Element Forces" },
  { d: 2, b: "-", i: "beamS", t: "Beam Element Stresses" },
  ...["S-AXIAL", "S-POINT C", "S-POINT D", "S-POINT E", "S-POINT F", "S-TORSIONAL", "S-XY", "S-XZ", "S-VON MISES", "S-MIN", "S-MAX"].map((t) => ({ d: 3, i: "beamS", t, sel: t === "S-VON MISES", last: t === "S-MAX" })),
  { d: 2, b: "+", i: "shellF", t: "Shell Element Stresses" },
];
const guide = (d, k, last) => {
  if (k === 1 && d > 1) return "";
  return k === d && last ? "h-2.5 self-start" : "self-stretch";
};
const TreeRow = ({ r }) => (
  <li className="flex h-5 items-center pl-[22px] text-xs whitespace-nowrap text-black">
    {Array.from({ length: r.d + 1 }, (_, k) => {
      const g = guide(r.d, k, r.last);
      return (
        <span key={k} className="grid h-5 w-[19px] shrink-0 grid-cols-1 grid-rows-1">
          {g && <span className={"col-start-1 row-start-1 ml-[9px] w-px border-l border-dotted border-[#8a8a8a] " + g} />}
          {k === r.d && <span className="col-start-1 row-start-1 ml-[9px] self-center border-t border-dotted border-[#8a8a8a]" />}
          {k === r.d && r.b && (
            <button aria-label={r.b === "+" ? "展开" : "折叠"} className="z-10 col-start-1 row-start-1 ml-[5px] h-[9px] w-[9px] self-center border border-[#8e97a8] bg-[#f4f5f8]">
              <svg viewBox="0 0 7 7" className="h-[7px] w-[7px]" aria-hidden="true"><path d={r.b === "+" ? "M1 3.500h5M3.500 1v5" : "M1 3.500h5"} stroke="#2a3a7a" /></svg>
            </button>
          )}
        </span>
      );
    })}
    <Icon n={r.i} />
    <span className={"ml-1 flex-1 pl-0.5 leading-5 font-['Open_Sans','Noto_Sans_CJK_SC',sans-serif] " + (/[a-z]{3}/.test(r.t) ? "text-xs " : "text-[13px] ") + (r.sel ? "bg-[#3294fb] text-white" : "")}>{r.t}</span>
  </li>
);

const PanelTitle = ({ children, gold }) => (
  <div className={"flex h-[23px] shrink-0 items-center gap-2.5 border-b px-0.5 text-xs " + (gold ? "border-[#b9b08c] bg-linear-to-b from-[#f3d98c] to-[#fae08c] text-[#4a4330]" : "border-[#c3c8d2] bg-linear-to-b from-[#b7bec9] to-[#cfd4dd] text-[#3f4a5e]")}>
    <h2 className="flex-1">{children}</h2>
    <button aria-label="固定"><Pin /></button>
    <button aria-label="关闭" className="pr-1"><Cross /></button>
  </div>
);

const Tri = ({ d, className = "" }) => (
  <svg viewBox="0 0 8 8" className={"h-2 w-2 " + className} aria-hidden="true"><path d={{ up: "M0 6h8L4 2z", down: "M0 2h8L4 6z", left: "M6 0v8L2 4z", right: "M2 0v8l4-4z" }[d]} fill="currentColor" /></svg>
);

function LeftPanel() {
  return (
    <aside className="flex w-[466px] shrink-0 flex-col border-r border-[#a9aeb9]">
      <PanelTitle gold>结果</PanelTitle>
      <div className="flex min-h-0 flex-1 flex-col border-b border-[#8b8f98] bg-white px-0.5 pt-px">
        <div className="flex h-5 shrink-0 border-b border-[#d8dadf] bg-linear-to-b from-white to-[#f1f2f5] text-xs leading-5">
          <span className="w-[304px] border-r border-[#e2e3e8] pl-1.5">条目</span>
          <span className="w-[69px] border-r border-[#e2e3e8] pl-1.5">号</span>
          <span className="w-[78px] border-r border-[#e2e3e8] pl-1.5">颜色</span>
        </div>
        <div className="flex min-h-0 flex-1">
          <ul className="min-w-0 flex-1 overflow-hidden">{ROWS.map((r, k) => <TreeRow key={k} r={r} />)}</ul>
          <div className="flex w-[17px] flex-col items-center bg-[#eeeeef] py-1.5 text-[#444]">
            <Tri d="up" />
            <div className="mt-[127px] flex h-[174px] w-[15px] flex-col items-center justify-center gap-0.5 border border-[#9b9b9b] bg-linear-to-r from-[#f5f5f5] to-[#cfcfcf]">
              <i className="h-px w-2 bg-[#555]" /><i className="h-px w-2 bg-[#555]" /><i className="h-px w-2 bg-[#555]" />
            </div>
            <Tri d="down" className="mt-auto" />
          </div>
        </div>
        <div className="flex h-[17px] shrink-0 items-center bg-[#ebebec] pl-1 text-[#333]">
          <Tri d="left" />
          <div className="ml-2 h-[15px] w-[15px] border border-[#9b9b9b] bg-linear-to-b from-[#f8f8f8] to-[#cfcfcf]" />
          <Tri d="right" className="mr-1 ml-auto" />
          <div className="h-[17px] w-[17px] border-r border-b border-[#222] bg-[#d6d3ca]" />
        </div>
      </div>
      <div className="flex h-7 shrink-0 items-start gap-1.5 bg-linear-to-b from-[#d0d5df] to-[#c5cbd6] pl-1 text-xs leading-6 text-[#3d4759]">
        <button className="px-1">模型</button><button className="px-1">分析</button>
        <button className="rounded-b-sm bg-[#f0f2f6] px-1">结果</button>
      </div>
      <PanelTitle>属性</PanelTitle>
      <label className="grid shrink-0 items-center">
        <select aria-label="属性类型" className="col-start-1 row-start-1 h-[21px] w-full appearance-none rounded-xs border border-[#777] bg-linear-to-b from-[#f6f6f6] to-[#dcdcdc] pl-0.5 text-xs"><option>云图</option></select>
        <Tri d="down" className="pointer-events-none col-start-1 row-start-1 mr-1 justify-self-end" />
      </label>
      <div className="flex h-16 shrink-0 overflow-hidden bg-[#eeeff3]">
        <table className="h-[72px] flex-1 border-collapse self-start text-xs leading-[17px]">
          <tbody>
            <tr className="h-[18px] text-[#6b7280]"><th className="w-[18px] p-0 text-center"><span className="inline-block h-[9px] w-[9px] border border-[#999] text-center leading-[6px]">-</span></th><th colSpan="2" className="p-0 pl-1 text-left font-normal">云图</th></tr>
            {[["平滑", "连续"], ["填充", "云图"], ["颜色", "云图"]].map(([a, b]) => (
              <tr key={a} className="h-[18px]"><td className="p-0" /><td className="w-[215px] border border-[#e3e4e8] bg-white p-0 pl-1">{a}</td><td className="border border-[#e3e4e8] bg-white p-0 pl-1">{b}</td></tr>
            ))}
          </tbody>
        </table>
        <div className="flex w-4 flex-col items-center py-1.5 text-[#444]"><Tri d="up" /><div className="mt-1 h-2 w-3.5 border border-[#999] bg-[#e8e8e8]" /><Tri d="down" className="mt-auto" /></div>
      </div>
      <button className="h-[21px] shrink-0 rounded-xs border border-[#777] bg-linear-to-b from-[#f6f6f6] to-[#dadada] text-xs">适用</button>
    </aside>
  );
}

/* ---------- viewport ---------- */
const LEGEND = [
  ["bg-[#ff0000]", "2.0%", "+5.01863e+001"], ["bg-[#ff4c00]", "3.2%", "+4.60734e+001"], ["bg-[#ffcc00]", "4.6%", "+4.19604e+001"],
  ["bg-[#ffff00]", "6.3%", "+3.78475e+001"], ["bg-[#99ff00]", "7.9%", "+3.37345e+001"], ["bg-[#18f400]", "9.7%", "+2.96215e+001"],
  ["bg-[#00ff22]", "9.5%", "+2.55086e+001"], ["bg-[#00ff99]", "12.3%", "+2.13956e+001"], ["bg-[#00ffff]", "13.3%", "+1.72827e+001"],
  ["bg-[#00ccff]", "13.9%", "+1.31697e+001"], ["bg-[#004cff]", "11.5%", "+9.05675e+000"], ["bg-[#0000ff]", "5.9%", "+4.94380e+000"],
];
const Legend = () => (
  <div className={"absolute top-3 right-[25px] w-[128px] text-[10px] text-black " + MONO}>
    <svg viewBox="0 0 128 21" className="h-[21px] w-full" aria-hidden="true">
      <path d="M.5.500h127v20H.5z" fill="#fdfdfd" stroke="#eee" />
      <path d="M6 10l10-7 4 3-7 5 3 2 5-3 4 3-9 6z" fill="#d3d3d3" /><path d="M19 5l12 6-9 6-3-3 4-3-7-4z" fill="#dedede" />
      <text x="42" y="7" fontSize="7" fill="#d0d0d0" fontFamily="Liberation Sans">midas</text>
      <text x="38" y="19" fontSize="15" fill="#cfcfcf" fontFamily="Liberation Sans">GTS</text>
      <text x="84" y="18" fontSize="22" fontWeight="700" fill="#cccccc" fontFamily="Liberation Sans">NX</text>
    </svg>
    <p className="mt-1 leading-[11px] whitespace-pre">{"BEAM STRESS\nS-VON MISES , N/mm^2"}</p>
    <ul className="mt-[9px] flex h-[284px] flex-col">
      {LEGEND.map(([c, p, v], k) => (
        <li key={v} className="flex flex-1 leading-[10px]">
          <span className={"w-[15px] border border-black " + (k ? "border-t-0 " : "") + c} />
          <span className="w-7 border-t border-[#999] pt-2 pl-2 text-[#c01030]">{p}</span>
          <span className="-mt-[5px]">{v}</span>
        </li>
      ))}
      <li className="flex h-1"><span className="w-[15px]" /><span className="w-7 border-t border-[#999]" /><span className="-mt-[5px] leading-[10px]">+8.30838e-001</span></li>
    </ul>
  </div>
);

const Model = () => (
  <svg viewBox="473 178 1424 674" className="h-full w-full" role="img" aria-label="模型云图">
    <defs>
      <linearGradient id="top" x1="0" x2="1" y1="0" y2="1"><stop offset="0" stopColor="#c4fcfc" /><stop offset=".5" stopColor="#dcfeff" /><stop offset="1" stopColor="#c6ffff" /></linearGradient>
      <linearGradient id="gl" x1="0" x2="1"><stop offset="0" stopColor="#677f7f" /><stop offset="1" stopColor="#55777c" /></linearGradient>
      <pattern id="mr" width="10" height="9" patternUnits="userSpaceOnUse" patternTransform="skewY(-30)"><rect width="10" height="9" fill="#0a46d8" /><path d="M1 2h5v3H1z" fill="#1b8ee0" /><path d="M6 5h3v2H6z" fill="#0a62e8" /><path d="M0 8.500h10M9.500 0v9" stroke="#062a98" /></pattern>
      <pattern id="ml" width="9" height="9" patternUnits="userSpaceOnUse" patternTransform="skewY(30)"><rect width="9" height="9" fill="#0838a8" /><path d="M2 2h4v4H2z" fill="#127cc0" /><path d="M0 8.500h9M8.500 0v9" stroke="#041a76" /></pattern>
      <pattern id="mi" width="8" height="9" patternUnits="userSpaceOnUse" patternTransform="skewY(30)"><rect width="8" height="9" fill="#04207c" /><path d="M1 2h4v3H1z" fill="#0a48b8" /><path d="M0 8.500h8M7.500 0v9" stroke="#021050" /></pattern>
      <linearGradient id="st" x1="0" x2="1"><stop offset="0" stopColor="#f4e800" /><stop offset=".25" stopColor="#3ce010" /><stop offset=".45" stopColor="#20b8d8" /><stop offset=".65" stopColor="#20c8d0" /><stop offset=".85" stopColor="#30e010" /><stop offset="1" stopColor="#d8f000" /></linearGradient>
      <linearGradient id="sv" x1="0" x2="0" y1="0" y2="1"><stop offset="0" stopColor="#ff7a00" /><stop offset=".25" stopColor="#ffb800" /><stop offset=".5" stopColor="#fff000" /><stop offset=".8" stopColor="#70f000" /><stop offset="1" stopColor="#20e020" /></linearGradient>
    </defs>
    <g stroke="#6d7a7c" strokeWidth="1">
      <path d="M898 427Q950 448 999 490C1045 530 1100 590 1163 622V650L999 545 898 480Z" fill="url(#gl)" />
      <path d="M1471 417Q1425 442 1374 478C1320 525 1260 580 1163 622V640L1354 540 1471 475Z" fill="#a5cccf" />
      <path d="M898 427C915 411 932 401 955 391S1010 360 1038 348C1090 330 1140 308 1205 271 1235 290 1260 306 1283 317 1320 332 1345 342 1374 355 1410 374 1440 395 1471 417Q1425 442 1374 478C1320 525 1260 580 1163 622 1100 590 1045 530 999 490Q950 448 898 427Z" fill="url(#top)" />
    </g>
    <g stroke="#4d4566" strokeWidth="1">
      <path d="M898 469Q950 488 999 523C1045 555 1100 597 1163 633V694C1100 658 1050 624 1000 595Q945 561 898 541Z" fill="#7d7c40" />
      <path d="M1163 633C1220 608 1260 583 1299 560Q1380 508 1471 467V529Q1400 560 1326 600C1270 632 1220 662 1163 694Z" fill="#d6d36e" />
      <path d="M898 541Q945 561 1000 595C1050 624 1100 658 1163 694V804L898 651Z" fill="#6e7f58" />
      <path d="M1471 529Q1400 560 1326 600C1270 632 1220 662 1163 694V804L1471 628Z" fill="#c0d990" />
    </g>
    <path d="M1041 401L1205 308 1327 378 1163 472Z" fill="url(#mi)" />
    <path d="M1041 401L1205 308V345L1070 418Z" fill="url(#mr)" />
    <path d="M1210 350L1294 398 1163 470 1085 424 1094 407 1120 392Z" fill="#cc00cc" />
    <path d="M1138 334l8 0 14 8-4 6-8-2zM1078 372l10 2 8-2-6 8z" fill="#f2d000" />
    <path d="M1140 335l14 9M1153 333l8 4M1150 346l10-4" stroke="#e02010" strokeWidth="3" />
    <path d="M1160 332h12M1244 331h20M1290 354h8" stroke="#e8c060" strokeWidth="3" strokeDasharray="2 1" />
    <path d="M1196 334h52" stroke="#b8e020" strokeWidth="3" />
    <path d="M1129 368l2-12 9 1 42 25 26 14 24 10 15 12 12 8-18-3-20-9-14-12-28-14-22-10z" fill="url(#st)" />
    <path d="M1107 376l2-8 9 1 32 20 30 16 32 20-16-4-24-14-27-16z" fill="url(#st)" />
    <path d="M1140 360l68 42 36 18M1114 371l60 36" stroke="#1a6a70" fill="none" />
    <path d="M1262 358l22 2v37l-5 10-12 1 2-11-6-9 4-13z" fill="url(#sv)" />
    <path d="M1092 382q-6 14-4 36" stroke="#20d0c8" strokeWidth="5" fill="none" strokeDasharray="3 1" />
    <path d="M1090 388l8-6" stroke="#d8e820" strokeWidth="4" />
    <path d="M1133 452l40-1 32 2" stroke="#20c8b8" strokeWidth="6" fill="none" />
    <path d="M1133 452l40-1 32 2" stroke="#146a78" strokeWidth="1" fill="none" strokeDasharray="3 2" />
    <path d="M1208 430l26 6-18 12z" fill="#30e010" />
    <path d="M1096 386h14" stroke="#6a8a90" strokeWidth="6" strokeDasharray="2 1" />
    <path d="M1041 401L1163 472V540L1062 443 1041 427Z" fill="url(#ml)" />
    <path d="M1163 472L1327 378V417L1163 540Z" fill="url(#mr)" />
    <path d="M1043 402L1205 311 1325 379 1163 471Z" fill="none" stroke="#0a3cb4" strokeWidth="5" strokeLinejoin="bevel" />
    <path d="M1043 402L1205 311 1325 379 1163 471Z" fill="none" stroke="#1268cc" strokeWidth="2" strokeDasharray="3 5" strokeLinejoin="bevel" />
    <path d="M1052 403l90-52M1195 322h18M1212 320l104 60M1180 458l110-63M1190 470l50-20" fill="none" stroke="#1cc0c8" strokeWidth="2" strokeDasharray="9 4" />
    <path d="M1232 438l58-34" stroke="#38e040" strokeWidth="3" strokeDasharray="5 3" />
    <path d="M1078 436l12 5-6 3zM1113 453l10 5-6 2z" fill="#20e0d0" />
    <g className={MONO} fontSize="10">
      <path d="M1162 343l12-7h204l-6 7 6 7h-204z" fill="#fff" stroke="#555" /><text x="1177" y="346">Max: 0.0L: 28.2372, 1.0L: 50.1863</text>
      <path d="M1069 426l12-7h212l-6 7 6 7h-212z" fill="#fff" stroke="#555" /><text x="1086" y="429">Min: 0.0L: 3.36847, 1.0L: 0.830838</text>
    </g>
  </svg>
);

const Triad = () => (
  <svg viewBox="0 0 56 70" className="absolute right-[34px] bottom-[27px] h-[70px] w-14" aria-hidden="true">
    <path d="M16 46V22" stroke="#0000c8" strokeWidth="3" /><path d="M11 27l5-10 5 10z" fill="#1818e0" />
    <path d="M16 46l16-9" stroke="#10a818" strokeWidth="3" /><path d="M29 34l12-2-8 9z" fill="#20d828" />
    <path d="M16 46l16 9" stroke="#a81010" strokeWidth="3" /><path d="M32 50l9 11-12-2z" fill="#f01010" /><circle cx="16" cy="46" r="3" fill="#d8c020" />
    <g fontFamily="Liberation Sans" fontSize="12"><text x="16" y="12" fill="#1010a0">Z</text><text x="47" y="28" fill="#40d840">Y</text><text x="47" y="65" fill="#e02020">X</text></g>
  </svg>
);

const Sep = () => <span className="mx-1 h-4 w-px bg-[#b5b8be]" />;
const ViewBar = () => (
  <div className="absolute top-2.5 left-[430px] flex h-6 items-center text-xs">
    <button aria-label="选择" className="flex h-[22px] w-[22px] items-center justify-center rounded-xs border border-[#c79a55] bg-[#fbd08a]"><Icon n="selBox" /></button>
    <button aria-label="下一个" className="flex w-[22px] justify-center"><Icon n="selNext" /></button><Sep />
    <button aria-label="捕捉" className="flex w-5 justify-center"><Icon n="snap" /></button><span className="px-1"><Caret /></span><Sep />
    <label className="grid items-center"><select aria-label="操作" className="col-start-1 row-start-1 h-[22px] w-[122px] appearance-none bg-white pl-0.5"><option>无操作 (O)</option></select><span className="pointer-events-none col-start-1 row-start-1 flex h-[22px] w-3 items-center justify-center justify-self-end rounded-xs bg-[#cfd1d8]"><Caret /></span></label>
    <label className="ml-1.5 grid items-center"><select aria-label="过滤" className="col-start-1 row-start-1 h-6 w-[126px] appearance-none border border-[#a0a0a0] bg-[#efefef]"><option /></select><span className="pointer-events-none col-start-1 row-start-1 justify-self-end pr-1.5"><Caret /></span></label><Sep />
    <button aria-label="拾取" className="flex w-[22px] justify-center"><Icon n="pick" /></button>
    <button aria-label="拾取多个" className="flex w-[22px] justify-center"><Icon n="pick" /></button>
    <button aria-label="列表" className="flex w-5 justify-center"><Icon n="list" /></button><Sep />
    <button aria-label="网格" className="flex w-[22px] justify-center"><Icon n="diamonds" /></button>
    <button aria-label="框选" className="flex w-[22px] justify-center"><Icon n="boxPick" /></button><Sep />
    <button aria-label="点选" className="flex w-[22px] justify-center"><Icon n="pickC" /></button>
    <button aria-label="取消" className="flex w-[22px] justify-center"><Icon n="pickX" /></button><Sep />
    <button aria-label="编号" className="flex w-5 justify-center"><Icon n="idArrow" /></button>
  </div>
);

const Viewport = () => (
  <div className="relative min-h-0 flex-1 overflow-hidden border-t-2 border-l-2 border-[#6b6b6b] bg-white">
    <Model />
    <div className={"absolute top-2 left-[21px] text-[10px] leading-3 text-[#8e8e8e] " + MONO}>
      <div className="flex items-center gap-0.5">
        <svg viewBox="0 0 121 12" className="h-3 w-[121px]" aria-hidden="true"><path d="M.5.500h120v8H.5zM60.500.500v8M.5 4.500h120M.5 0v12M60.500 8v4M120.500 0v12" fill="#fff" stroke="#999" /><path d="M0 1h60v3H0zM60 5h60v3H60z" fill="#aaa" /></svg>
        <span>mm</span>
      </div>
      <div className="mt-1.5 flex gap-7"><span>0</span><span>5.89e+003 1.18e+004</span></div>
    </div>
    <ViewBar />
    <Legend />
    <Triad />
    <div className={"absolute bottom-2.5 left-3.5 flex text-[11px] leading-4 whitespace-pre " + MONO}>
      <span className="w-[68px]">[ DATA ]</span><span className="w-[43px]">51#,</span>
      <span className="w-[107px] text-xs">开挖2降水应力,</span><span className="w-[162px]">INCR=1 (LOAD=1.000),</span>
      <span className="w-[82px]">[ UNIT ]</span><span className="w-7">N,</span><span>mm</span>
    </div>
  </div>
);

const Player = () => (
  <div className="flex h-[31px] shrink-0 items-center border-t border-[#d0d0d4] bg-linear-to-b from-[#eeeef0] to-[#dadbe0] pl-3 text-xs">
    <button aria-label="播放" className="flex w-[22px] justify-center"><Tri d="right" className="h-3" /></button>
    <button aria-label="停止" className="flex w-[22px] justify-center"><span className="h-2.5 w-2 bg-[#555a66]" /></button><Sep />
    <button aria-label="保存" className="flex w-[22px] justify-center"><Icon n="saveG" /></button>
    <button aria-label="录像" className="flex w-[22px] justify-center"><Icon n="camera" /></button>
    <button aria-label="波形" className="flex w-[22px] justify-center"><Icon n="wave" /></button>
    <button aria-label="下载" className="flex w-[22px] justify-center"><Icon n="down" /></button><Sep />
    <label className="grid items-center"><select aria-label="等级" className="col-start-1 row-start-1 h-6 w-[145px] appearance-none bg-white pl-1"><option>等级 3 (正常)</option></select><span className="pointer-events-none col-start-1 row-start-1 flex h-6 w-3.5 items-center justify-center justify-self-end bg-[#dcdde2]"><Caret /></span></label>
    <div className="ml-2 flex-1 self-start pt-1">
      <input type="range" aria-label="帧" min="0" max="1000" defaultValue="142" className="h-3.5 w-full appearance-none bg-linear-to-b from-transparent from-45% via-[#aaabb0] via-50% to-transparent to-60% [&::-webkit-slider-thumb]:h-3 [&::-webkit-slider-thumb]:w-2 [&::-webkit-slider-thumb]:appearance-none [&::-webkit-slider-thumb]:rounded-b-md [&::-webkit-slider-thumb]:border [&::-webkit-slider-thumb]:border-[#666] [&::-webkit-slider-thumb]:bg-[#f3f3f3]" />
    </div>
  </div>
);

const DocTabs = () => (
  <div className="flex h-7 shrink-0 items-start bg-linear-to-b from-[#dfe2e9] to-[#cdd1da] pl-0.5">
    <button aria-label="左移" className="flex h-6 w-3 items-center justify-center text-[#7a808c]"><Tri d="left" /></button>
    <svg viewBox="0 0 24 22" className="h-[22px] w-6" aria-hidden="true"><path d="M0 0L22 21.500H24V0z" fill="#fff" /><path d="M0 0l22 21.500h2" fill="none" stroke="#777d89" /></svg>
    <div className="flex h-[22px] items-center gap-2 border-r border-b border-[#777d89] bg-white pr-1.5 pl-1 text-xs">
      <svg viewBox="0 0 16 16" className="h-4 w-4" aria-hidden="true"><path d="M2.500.500h12v11l-4 4h-8z" fill="#fff" stroke="#6a7280" /><text x="3" y="6" fontSize="5" fontWeight="700" fill="#d02020" fontFamily="Liberation Sans">DOC</text><path d="M4 8.500h9M4 11h7M4 13h5" stroke="#8a92a0" /></svg>
      <b className="font-['Roboto','Noto_Sans_CJK_SC',sans-serif]">wd51#墩围堰（逐层安装内支撑）-黄懿</b>
      <button aria-label="关闭"><Cross /></button>
    </div>
    <button aria-label="右移" className="mr-2.5 ml-auto flex h-6 items-center text-[#7a808c]"><Tri d="right" /></button>
  </div>
);

const Watermark = () => (
  <div className="pointer-events-none absolute -top-[3px] left-[983px] flex h-[83px] items-start" aria-hidden="true">
    <svg viewBox="0 0 68 83" className="h-[83px] w-[68px]">
      <defs><linearGradient id="wm" x1="0" x2="0" y1="0" y2="1"><stop offset="0" stopColor="#a9c8f6" /><stop offset="1" stopColor="#dbe9fd" /></linearGradient><linearGradient id="wm2" x1="1" x2="0" y1="0" y2="1"><stop offset="0" stopColor="#bcd6fb" /><stop offset="1" stopColor="#fdfeff" /></linearGradient></defs>
      <path d="M0 5q4-8 13 0l43 26q14 9 3 15L0 82z" fill="#fff" />
      <path d="M0 15l18 8v35L0 68z" fill="url(#wm)" /><path d="M0 69l46-29 18 10-50 30q-14 6-14-11z" fill="url(#wm2)" />
    </svg>
    <span className="ml-9 flex gap-3 pt-1.5 text-[64px] leading-[64px] font-bold text-white"><span className="font-['Lato']">QV</span><span>剪辑</span></span>
  </div>
);

const Output = () => (
  <section className="relative flex h-[110px] shrink-0 flex-col bg-white">
    <PanelTitle>输出</PanelTitle>
    <Watermark />
    <pre className="flex-1 pl-0.5 text-xs leading-4 text-black font-['Noto_Sans',sans-serif]">{`> midas GTS NX 2018R1 (64bit)
> Copyright (C) SINCE 2007 MIDAS Information Technology Co.,Ltd. ALL RIGHTS RESERVED.
> midas GTS NX 2018R1 (64bit)
> Copyright (C) SINCE 2007 MIDAS Information Technology Co.,Ltd. ALL RIGHTS RESERVED.`}</pre>
  </section>
);

/* ---------- status and task bars ---------- */
const Unit = ({ v }) => (
  <label className="grid h-[17px] items-center self-end">
    <select aria-label="单位" className="col-start-1 row-start-1 h-[17px] w-[49px] appearance-none rounded-t-xs border border-b-0 border-[#70747c] bg-linear-to-b from-[#fafafa] to-[#d6d7da] pl-1 text-black"><option>{v}</option></select>
    <Tri d="down" className="pointer-events-none col-start-1 row-start-1 mr-1 justify-self-end" />
  </label>
);
const StatusBar = () => (
  <footer className={"flex h-5 shrink-0 items-center justify-end border-t border-[#8e929b] bg-linear-to-b from-[#d2d4d9] via-[#abadb5] to-[#d2d4d9] text-[10px] leading-[19px] text-[#1f2530] " + MONO}>
    <span className="w-[206px] border-l border-[#8a8d95] pl-1">W: -53799.7, -71786.1</span>
    <span className="w-[336px] border-l border-[#8a8d95] pl-1">X: 0~-21474.8 Y: 0~-21474.8 Z:-21474.8~0</span>
    <span className="w-[236px] border-l border-[#8a8d95] pl-1">G:[387] N:[20172] E:[33314]</span>
    <span className="flex h-full w-[226px] gap-0.5 border-l border-[#8a8d95] pl-0.5"><Unit v="N" /><Unit v="mm" /><Unit v="day" /></span>
  </footer>
);

const chrome = <><circle cx="16" cy="16" r="14" fill="#e8382a" /><path d="M16 16L3 10a14 14 0 0 0 10 19.700z" fill="#2aa24a" /><path d="M16 16l-3 13.700A14 14 0 0 0 29 10H16z" fill="#fbc91c" /><circle cx="16" cy="16" r="6.500" fill="#fff" /><circle cx="16" cy="16" r="5" fill="#3b7de8" /></>;
const eGlyph = <><path d="M8 18h16q0-8-8-8t-8 8 8 9q5 0 7-4" fill="none" stroke="#fff" strokeWidth="8" /><path d="M8 18h16q0-8-8-8t-8 8 8 9q5 0 7-4" fill="none" stroke="#3fb82c" strokeWidth="5.500" /><path d="M4 28Q0 16 20 5q9-4 8 2" fill="none" stroke="#7fe04a" strokeWidth="3" /></>;
const finder = <><circle cx="19" cy="12" r="9" fill="none" stroke="#f2750f" strokeWidth="5" /><path d="M14 19L6 30" stroke="#e2600a" strokeWidth="6" strokeLinecap="round" /></>;
const wechat = <><ellipse cx="13" cy="13" rx="11" ry="9" fill="#62c52c" /><circle cx="9" cy="11" r="1.500" fill="#255" /><circle cx="16" cy="11" r="1.500" fill="#255" /><ellipse cx="22" cy="21" rx="9" ry="7.500" fill="#f2f4f3" /><circle cx="19" cy="20" r="1.200" fill="#777" /><circle cx="25" cy="20" r="1.200" fill="#777" /></>;
const baidu = <><rect x="1" y="1" width="30" height="30" rx="6" fill="#fff" /><circle cx="16" cy="10" r="4.500" fill="none" stroke="#2a8ee8" strokeWidth="3" /><circle cx="10" cy="19" r="4.500" fill="none" stroke="#2a6ee8" strokeWidth="3" /><circle cx="22" cy="19" r="4.500" fill="none" stroke="#2a8ee8" strokeWidth="3" /><path d="M13 17l6 5" stroke="#e85a6a" strokeWidth="3" /></>;
const APPS = [
  ["360", "btn", eGlyph],
  ["Chrome", "gold", chrome],
  ["搜索", "", finder],
  ["播放器", "", <><path d="M6 3l6 3h8l6-3 3 8q4 19-13 19T3 11z" fill="#ef9a24" /><path d="M5 20l5 2M6 26l5-1M27 20l-5 2M26 26l-5-1" stroke="#7a3a0a" strokeWidth="2" /><circle cx="16" cy="14" r="9" fill="#fff" stroke="#7a3a0a" /><path d="M13 10v8l7-4z" fill="#4a1f10" /></>],
  ["网盘", "", baidu],
  ["微信", "btn", wechat],
  ["资源管理器", "btn", <><path d="M2 5h10l3 3h14v21H2z" fill="#f3d66a" stroke="#b08e2c" /><path d="M4 3h22v5H4z" fill="#fff8d8" stroke="#b08e2c" /><path d="M6 4h4M14 4h5" stroke="#2aa24a" strokeWidth="2" /><path d="M2 12h28v17H2z" fill="#f9e490" /><path d="M7 29v-9h18v9h-5v-5h-8v5z" fill="#7cc8ea" stroke="#3a8ab8" /></>],
  ["N", "btn", <><path d="M16 1l13 7v16l-13 7-13-7V8z" fill="#3f3a94" /><path d="M16 1l13 7v16l-13 7z" fill="#2c2a74" /><path d="M10 23V9l12 14V9" fill="none" stroke="#f79a2a" strokeWidth="4" /></>],
  ["GTS NX", "lit", "nx"],
  ["WPS", "btn", <><rect x="1" y="1" width="30" height="30" rx="4" fill="#2a82ee" /><path d="M6 9h4l3 12 4-12 3 12 5-12" fill="none" stroke="#fff" strokeWidth="2.500" /><rect x="20" y="19" width="10" height="11" rx="1" fill="#f07050" /></>],
];
const TRAY = [
  ["键盘", <><rect x="3" y="9" width="26" height="15" rx="2" fill="#e6e6e6" stroke="#555" /><path d="M6 13h20M6 17h20M9 21h14" stroke="#555" strokeWidth="2" strokeDasharray="2 2" /></>],
  ["花", <><g fill="#f0a0a8" stroke="#c8404c"><circle cx="16" cy="8" r="6" /><circle cx="8" cy="14" r="6" /><circle cx="24" cy="14" r="6" /><circle cx="11" cy="24" r="6" /><circle cx="21" cy="24" r="6" /></g><circle cx="16" cy="16" r="4" fill="#fff" /></>],
  ["层", <><path d="M2 10L18 3l12 7-15 9z" fill="#5ab0f8" /><path d="M2 10v6l13 9 15-9v-6l-15 9z" fill="#fff" /><path d="M2 16v5l13 9 15-9v-5l-15 9z" fill="#2a74e0" /></>],
  ["网盘", baidu],
  ["水滴", <path d="M14 3q16 8 14 18-3 9-13 8T3 20Q6 10 14 3z" fill="#f2b45a" stroke="#c87a20" />],
  ["e", <><circle cx="16" cy="16" r="14" fill="#4cba3c" /><path d="M9 17h14q0-7-7-7t-7 7 7 7q4 0 6-3" fill="none" stroke="#fff" strokeWidth="3" /></>],
  ["搜索", finder],
  ["微信", wechat],
  ["QQ", <><ellipse cx="16" cy="15" rx="9" ry="13" fill="#151515" /><ellipse cx="16" cy="20" rx="7" ry="8" fill="#fff" /><path d="M6 16h20v4H6z" fill="#d8281c" /><circle cx="23" cy="23" r="7" fill="#f0a050" /><path d="M10 9h12l-6 4z" fill="#f4b020" /></>],
  ["加速", <><circle cx="16" cy="16" r="14" fill="#f4d81c" /><path d="M2 16a14 14 0 0 1 28 0q-6-7-14-2T2 16z" fill="#3cae30" /><path d="M16 9v14M9 16h14" stroke="#123" strokeWidth="4" /></>],
  ["蓝牙", <><ellipse cx="16" cy="16" rx="11" ry="14" fill="#123a78" /><path d="M10 11l12 10-6 6V5l6 6-12 10" fill="none" stroke="#fff" strokeWidth="2.500" /></>],
  ["TX", <><rect x="2" y="2" width="28" height="28" fill="#2a86c8" /><path d="M5 8h8M9 8v9M16 8l8 9M24 8l-8 9M6 22h20M6 26h14" stroke="#e8f4ff" strokeWidth="2.500" /></>],
  ["电源", <><path d="M14 6h14v8l-4 4v10h-6V18l-4-4z" fill="#fff" stroke="#333" strokeWidth="2" /><path d="M18 1v5M24 1v5" stroke="#fff" strokeWidth="2" /><path d="M2 14h15v16H2z" fill="#c81414" /><path d="M5 18l9 8M14 18l-9 8" stroke="#111" strokeWidth="3" /></>],
  ["网络", <><rect x="9" y="7" width="21" height="15" fill="#8292a6" stroke="#fff" strokeWidth="3" /><path d="M14 28h12M20 23v5M3 3v10h5M6 13v15h6" stroke="#fff" strokeWidth="3" fill="none" /></>],
  ["音量", <><path d="M4 12h5l8-8v24l-8-8H4z" fill="#fff" /><path d="M21 11q4 5 0 10M25 7q7 9 0 18" fill="none" stroke="#fff" strokeWidth="2" /></>],
];
const Taskbar = () => (
  <nav className="flex h-[39px] shrink-0 items-stretch border-t border-[#3f5064] bg-[#a3bcda]">
    <div className="w-[118px] bg-linear-to-r from-[#7f90a8] to-[#8d9cb0]">
      <button aria-label="开始" className="ml-1.5 flex h-full items-center">
        <svg viewBox="0 0 38 38" className="h-9 w-10"><defs><radialGradient id="orb" cy=".85"><stop offset="0" stopColor="#3ad0f0" /><stop offset=".6" stopColor="#1c5f9c" /><stop offset="1" stopColor="#123a66" /></radialGradient></defs><circle cx="19" cy="19" r="17" fill="url(#orb)" stroke="#8fb4d4" />
          <path d="M10 12q4-3 8 0l-1 7q-4-3-8 0z" fill="#ee5a2a" /><path d="M19 12q4 3 9 0l-1 7q-4 3-9 0z" fill="#7cc242" /><path d="M9 20q4-3 8 0l-1 7q-4-3-8 0z" fill="#3aa0e8" /><path d="M18 20q4 3 9 0l-1 7q-4 3-9 0z" fill="#fbc822" /></svg>
      </button>
    </div>
    <div className="flex flex-1 gap-0.5 pl-px">
      {APPS.map(([name, kind, g]) => (
        <button key={name} aria-label={name} className={"flex w-[60px] items-center justify-center rounded-xs border " + (kind === "gold" ? "border-[#8b7a4a] bg-[#f6c860]" : kind === "lit" ? "border-[#64788f] bg-[#dce5f0]" : kind ? "border-[#64788f] bg-[#b9cbe1]" : "border-transparent")}>
          {g === "nx" ? <NxMark className="h-8 w-8 bg-white" /> : <svg viewBox="0 0 32 32" className="h-8 w-8" aria-hidden="true">{g}</svg>}
        </button>
      ))}
    </div>
    <div className="flex items-center bg-linear-to-r from-[#a3bcda] via-[#8192a8] via-10% to-[#8192a8] pl-5">
      {TRAY.map(([name, g], k) => (
        <button key={name} aria-label={name} className={"flex w-6 justify-center " + (k ? "" : "mr-1.5")}><svg viewBox="0 0 32 32" className="h-4 w-4" aria-hidden="true">{g}</svg></button>
      ))}
      <div className="w-[88px] pl-px text-center text-xs leading-[19px] text-white"><div>10:50</div><div>2020/2/20</div></div>
      <button aria-label="通知" className="relative mx-1.5 flex h-full w-6 items-center">
        <svg viewBox="0 0 20 20" className="h-5 w-5" aria-hidden="true"><path d="M1 6h3v13H1zM4 2h15v17H4z" fill="#fff" /><path d="M7 7h4M7 10h9M7 13h9M7 16h9" stroke="#6a7a90" strokeWidth="1.500" /></svg>
        <span className="absolute top-1 right-0 h-3.5 w-3 bg-[#222] text-center text-[10px] leading-[14px] text-white">2</span>
      </button>
      <span className="h-full w-3.5 border-l border-[#2e3c4e] bg-linear-to-br from-[#a5b2c4] to-[#5e6e84]" />
    </div>
  </nav>
);

const Drop = ({ children }) => <button className="flex items-center gap-2 text-xs text-[#4c5669]">{children}<Caret /></button>;

export default function App() {
  return (
    <div className={"relative flex h-screen flex-col overflow-hidden bg-[#cfd3dd] " + UI}>
      <header className="relative shrink-0">
        <div className="flex h-0.5 bg-[#eceef4]"><span className="w-[72px] bg-[#5a82f0]" /></div>
        <div className="flex h-[27px] items-center border-b border-[#aeb2ba] bg-linear-to-b from-[#bcc2cb] to-[#eff1f2] pl-12">
          <div className="flex h-6 w-[210px] items-center gap-1.5 rounded-r-full border border-l-0 border-[#c4c8cf] bg-[#e0e3e8] pl-1">
            {["new", "open", "save", "folderUp", "folders", "undo", "list", "redo", "list"].map((n, k) => <button key={k} aria-label={n}><Icon n={n} /></button>)}
          </div>
          <span className="pl-1.5"><Caret className="text-gray-700" /></span>
          <h1 className="flex-1 pl-[642px] text-xs text-[#5f6673]"><span className="text-[#4a6f9c]">GTS NX</span> - [wd51#墩围堰（逐层安装内支撑）-黄懿]</h1>
          <div className="flex gap-6 pr-3"><button aria-label="最小化"><Min /></button><button aria-label="还原"><Restore /></button><button aria-label="关闭窗口"><Cross /></button></div>
        </div>
        <div className="flex h-[26px] items-end pl-12 text-xs text-[#4c5669]">
          {[["几何", "w-[47px]"], ["网格", "w-[56px]"], ["静力/边坡分析", "w-[104px]"], ["渗流/固结分析", "w-[110px]"], ["动力分析", "w-[74px]"], ["分析", "w-[57px]"], ["结果", "w-[47px]"], ["工具", "w-[57px]"]].map(([t, w]) => (
            <button key={t} className={"h-[23px] " + w + (t === "结果" ? " rounded-t-xs border border-b-0 border-[#e6eaf0] bg-[#f1f5f8]" : "")}>{t}</button>
          ))}
          <div className="ml-auto flex h-full items-center gap-2 pt-0.5">
            <Drop>样式</Drop><Drop>背景</Drop><Drop>语言</Drop>
            <button aria-label="帮助"><svg viewBox="0 0 14 14" className="h-3.5 w-3.5"><circle cx="7" cy="7" r="6.500" fill="#2a62c8" stroke="#9ab4e4" /><path d="M5 5.500q0-2 2-2t2 2q0 1-2 2v1" fill="none" stroke="#fff" strokeWidth="1.500" /><path d="M6.300 9.500h1.500V11H6.300z" fill="#fff" /></svg></button>
            <div className="flex gap-2 pr-1 pl-1"><button aria-label="最小化文档"><Min /></button><button aria-label="还原文档"><Restore /></button><button aria-label="关闭文档"><Cross /></button></div>
          </div>
        </div>
        <button aria-label="菜单" className="absolute top-1.5 left-1 flex h-[37px] w-9 items-center justify-center rounded-full border border-[#8c919b] bg-linear-to-b from-white to-[#c9cdd5]"><NxMark className="h-7 w-7" /></button>
      </header>
      <Ribbon />
      <Toolbar />
      <main className="flex min-h-0 flex-1">
        <LeftPanel />
        <div className="flex min-w-0 flex-1 flex-col pl-[5px]">
          <div className="flex min-h-0 flex-1 flex-col border-t-2 border-white"><Viewport /></div>
          <Player />
          <DocTabs />
          <Output />
        </div>
        <div className="w-[23px] shrink-0 pt-1">
          <button className="ml-[3px] flex h-[95px] w-5 flex-col items-center gap-1 border border-r-0 border-[#c9a95c] bg-linear-to-r from-[#fbeeb8] to-[#f9d365] pt-0.5 text-xs text-[#5a4a20]">
            <svg viewBox="0 0 14 14" className="h-3.5 w-3.5" aria-hidden="true"><circle cx="7" cy="7" r="6.500" fill="#5fc04a" stroke="#3a8a2c" /><path d="M3 7h8M5 5L3 7l2 2M9 5l2 2-2 2" stroke="#fff" fill="none" /></svg>
            <span className="[writing-mode:vertical-rl]">任务窗口</span>
          </button>
        </div>
      </main>
      <StatusBar />
      <Taskbar />
      <svg viewBox="0 0 14 20" className="pointer-events-none absolute top-[575px] left-[361px] h-5 w-3.5" aria-hidden="true"><path d="M1 1v15l3.500-3 2.500 6 2.500-1-2.500-6h5z" fill="#fff" stroke="#222" /></svg>
    </div>
  );
}
